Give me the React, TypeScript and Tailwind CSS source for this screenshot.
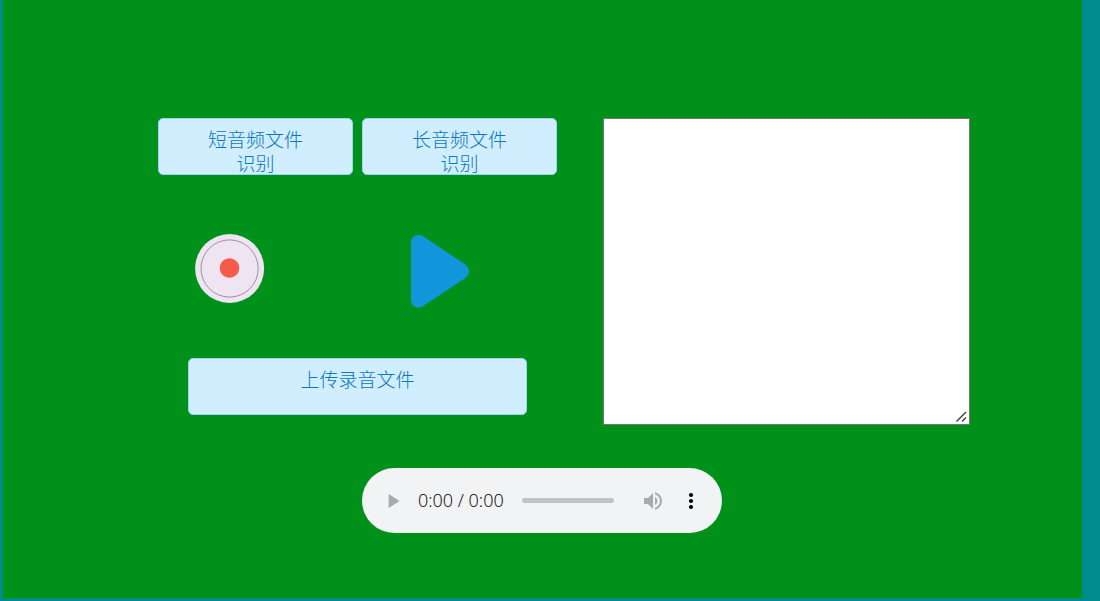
import { useState, type ReactNode } from "react";

function FileButton({ children, className = "" }: { children: ReactNode; className?: string }) {
  return (
    <button
      type="button"
      className={`flex h-[57px] items-start justify-center rounded-[5px] border border-[#99d3f5] bg-[#d0eeff] px-12 pt-2 text-center text-[19px] leading-6 font-light text-[#0a77bd] ${className}`}
    >
      <span>{children}</span>
    </button>
  );
}

function RecordIcon() {
  return (
    <svg viewBox="0 0 70 70" className="size-[70px]" aria-hidden="true">
      <circle cx="34.6" cy="34.5" r="34.5" fill="#efe4f2" />
      <circle cx="34.6" cy="34.5" r="28.6" fill="none" stroke="#77707a" strokeWidth="0.7" />
      <circle cx="34.5" cy="34" r="9.8" fill="#f55a4a" />
    </svg>
  );
}

function PlayIcon() {
  return (
    <svg viewBox="0 0 58 73" className="h-[73px] w-[58px]" aria-hidden="true">
      <path
        d="M0 8C0 1.5 6-1.8 12 1.3L54 29.3C59.3 33 59.3 39.5 54 43.2L12 71.3C6 74.6 0 71 0 65Z"
        fill="#1296db"
      />
    </svg>
  );
}

function AudioPlayer() {
  const [position, setPosition] = useState(0);

  return (
    <div className="flex h-[65px] w-[360px] items-center rounded-full bg-[#f1f3f4] pr-[19px] pl-5">
      <button type="button" aria-label="播放" disabled className="flex size-6 items-center justify-center">
        <svg viewBox="0 0 12 14" className="h-[14px] w-3 fill-[#a9aaaa]" aria-hidden="true">
          <path d="M0.7 0v14L11.5 7z" />
        </svg>
      </button>
      <span className="ml-3 w-[86px] font-['Open_Sans','Noto_Sans',sans-serif] text-[18px] font-light whitespace-nowrap text-black">
        0:00 / 0:00
      </span>
      <input
        type="range"
        aria-label="进度"
        min={0}
        max={100}
        value={position}
        onChange={(e) => setPosition(Number(e.target.value))}
        className="ml-[18px] h-[5px] w-[92px] appearance-none rounded-full bg-[#c1c2c3] [&::-webkit-slider-thumb]:size-0 [&::-webkit-slider-thumb]:appearance-none"
      />
      <button type="button" aria-label="音量" className="ml-[27px] flex size-6 items-center justify-center">
        <svg viewBox="0 0 24 24" className="size-6 fill-[#a9aaaa]" aria-hidden="true">
          <path d="M3 9v6h4l5 5V4L7 9H3zm13.5 3c0-1.77-1.02-3.29-2.5-4.03v8.05c1.48-.73 2.5-2.25 2.5-4.02zM14 3.23v2.06c2.89.86 5 3.54 5 6.71s-2.11 5.85-5 6.71v2.06c4.01-.91 7-4.49 7-8.77s-2.99-7.86-7-8.77z" />
        </svg>
      </button>
      <button type="button" aria-label="更多" className="ml-auto flex size-6 items-center justify-center">
        <svg viewBox="0 0 24 24" className="size-6 fill-black" aria-hidden="true">
          <circle cx="12" cy="6" r="2.1" />
          <circle cx="12" cy="12" r="2.1" />
          <circle cx="12" cy="18" r="2.1" />
        </svg>
      </button>
    </div>
  );
}

function ResultBox() {
  return (
    <div className="relative flex">
      <textarea
        aria-label="识别结果"
        className="h-[307px] w-[367px] border border-[#767676] bg-white p-1 outline-none [&::-webkit-resizer]:hidden"
      />
      {/* resize grip, drawn over the native corner */}
      <svg
        viewBox="0 0 12 12"
        className="pointer-events-none absolute right-[3px] bottom-[2px] size-3"
        fill="none"
        stroke="#444444"
        strokeWidth="1.5"
        aria-hidden="true"
      >
        <path d="M1.5 10.5L11 1M7 10.5L11 6.5" />
      </svg>
    </div>
  );
}

export default function App() {
  return (
    <div className="min-h-screen bg-[#008c8c] pr-[18px] pb-[3px] pl-[3px] font-['Noto_Sans_CJK_SC',sans-serif]">
      <main className="min-h-[calc(100vh-3px)] bg-[#00911b] pt-[118px] pb-14">
        <div className="flex items-start gap-[46px] pl-[155px]">
          <div className="w-[399px]">
            <div className="grid grid-cols-2 gap-x-[9px]">
              <FileButton>短音频文件识别</FileButton>
              <FileButton>长音频文件识别</FileButton>
            </div>
            <div className="grid grid-cols-2 items-start gap-x-[9px] pt-[59px] pb-[50px]">
              <button type="button" aria-label="录音" className="justify-self-start pl-[37px]">
                <RecordIcon />
              </button>
              <button type="button" aria-label="播放录音" className="justify-self-start pt-px pl-[49px]">
                <PlayIcon />
              </button>
            </div>
            <FileButton className="mx-auto w-[339px]">上传录音文件</FileButton>
          </div>
          <ResultBox />
        </div>
        <div className="mt-[43px] flex justify-center pr-px">
          <AudioPlayer />
        </div>
      </main>
    </div>
  );
}
